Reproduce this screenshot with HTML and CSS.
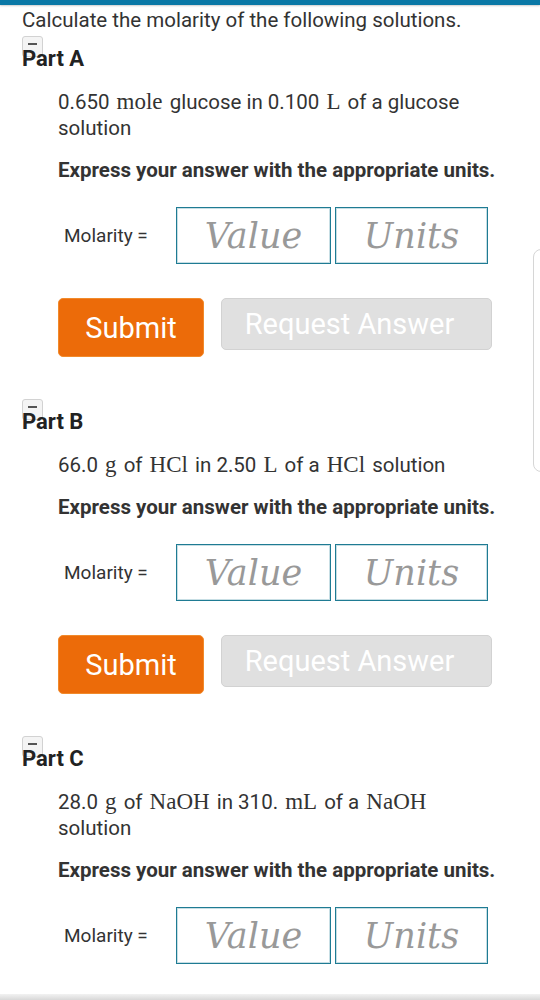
FILE: index.html
```html
<!DOCTYPE html>
<html lang="en">

<head>
  <meta charset="UTF-8">
  <meta name="viewport" content="width=device-width, initial-scale=1.0">
  <title>Molarity</title>
  <link rel="stylesheet" href="styles.css">
</head>

<body>

  <div class="top-bar"></div>

  <div class="page">

    <p class="intro">Calculate the molarity of the following solutions.</p>

    <!-- Part A -->
    <section class="part">
      <h2 class="part-title"><span class="collapse"></span>Part A</h2>
      <div class="part-body">
        <p class="problem">0.650 <span class="m">mole</span> glucose in 0.100 <span class="m">L</span> <span>of a glucose</span> solution</p>
        <p class="hint">Express your answer with the appropriate units.</p>
        <div class="answer-row">
          <span class="label">Molarity =</span>
          <div class="field">Value</div>
          <div class="field">Units</div>
        </div>
        <div class="buttons">
          <button class="submit">Submit</button>
          <button class="request">Request Answer</button>
        </div>
      </div>
    </section>

    <!-- Part B -->
    <section class="part">
      <h2 class="part-title"><span class="collapse"></span>Part B</h2>
      <div class="part-body">
        <p class="problem">66.0 <span class="m">g</span> of <span class="m">HCl</span> in 2.50 <span class="m">L</span> of a <span class="m">HCl</span> solution</p>
        <p class="hint">Express your answer with the appropriate units.</p>
        <div class="answer-row">
          <span class="label">Molarity =</span>
          <div class="field">Value</div>
          <div class="field">Units</div>
        </div>
        <div class="buttons">
          <button class="submit">Submit</button>
          <button class="request">Request Answer</button>
        </div>
      </div>
    </section>

    <!-- Part C -->
    <section class="part">
      <h2 class="part-title"><span class="collapse"></span>Part C</h2>
      <div class="part-body">
        <p class="problem">28.0 <span class="m">g</span> of <span class="m">NaOH</span> in 310. <span class="m">mL</span> of a <span class="m">NaOH</span> solution</p>
        <p class="hint">Express your answer with the appropriate units.</p>
        <div class="answer-row">
          <span class="label">Molarity =</span>
          <div class="field">Value</div>
          <div class="field">Units</div>
        </div>
      </div>
    </section>

  </div>

  <!-- side panel peeking in from the right edge -->
  <div class="side-panel"></div>

  <div class="bottom-bar"></div>

</body>

</html>
```

FILE: styles.css
```css
/* Basic page setup */
body {
  margin: 0;
  background: #fff;
  color: #333;
  font-family: Roboto, "Noto Sans", sans-serif;
  height: 1000px;
  overflow: hidden;
  position: relative;
}

.top-bar {
  height: 5px;
  background: #0a78a6;
  box-shadow: 0 1px 2px rgba(0, 0, 0, 0.2);
}

.page {
  padding: 0 0 0 22px;
}

.intro {
  margin: 2px 0 0;
  font-size: 20.5px;
  line-height: 26px;
  color: #333;
}

/* Parts */
.part-title {
  position: relative;
  margin: 52px 0 0;
  font-size: 22px;
  line-height: 26px;
  font-weight: bold;
  color: #222;
}
.intro + .part .part-title {
  margin-top: 13px;
}

/* the little collapse toggle tucked behind the heading */
.collapse {
  position: absolute;
  left: 0;
  top: -10px;
  width: 19px;
  height: 19px;
  border: 1px solid #d2d2d2;
  border-radius: 3px;
  background: #f4f4f4;
  z-index: -1;
}
.collapse::after {
  content: "";
  position: absolute;
  left: 5px;
  top: 6px;
  width: 9px;
  height: 2px;
  background: #555;
}

.part-body {
  padding-left: 36px;
}

.problem {
  margin: 17px 0 0;
  font-size: 20.5px;
  line-height: 26px;
  color: #333;
  padding-right: 40px;
}
.problem .m {
  font-family: "Liberation Serif", "DejaVu Serif", serif;
  font-size: 23px;
  line-height: 1;
  margin: 0 2px;
}

.hint {
  margin: 17px 0 0;
  font-size: 20.5px;
  line-height: 24px;
  font-weight: bold;
  color: #333;
}

/* Answer inputs */
.answer-row {
  display: flex;
  align-items: center;
  margin-top: 25px;
}
.label {
  font-size: 19px;
  color: #333;
  margin-left: 6px;
  width: 112px;
}
.field {
  box-sizing: border-box;
  width: 155px;
  height: 57px;
  border: 1px solid #1f7b93;
  box-shadow: inset 0 0 0 1px rgba(31, 123, 147, 0.25);
  margin-right: 4px;
  padding-top: 6px;
  font-family: "DejaVu Serif", serif;
  font-style: italic;
  font-size: 35px;
  color: #999;
  text-align: center;
  line-height: 44px;
}
.field + .field {
  width: 153px;
}

/* Buttons */
.buttons {
  display: flex;
  align-items: flex-start;
  gap: 17px;
  margin-top: 34px;
}
.submit, .request {
  font-family: Roboto, "Noto Sans", sans-serif;
  font-size: 29px;
  color: #fff;
  border-radius: 5px;
  cursor: pointer;
  padding: 0;
}
.submit {
  width: 146px;
  height: 59px;
  background: #ec6b09;
  border: 1px solid #f18a2b;
}
.request {
  width: 271px;
  height: 52px;
  padding-right: 14px;
  background: #e0e0e0;
  border: 1px solid #d2d2d2;
}

.side-panel {
  position: absolute;
  left: 533px;
  top: 249px;
  width: 30px;
  height: 221px;
  border: 1px solid #d6d6d6;
  border-radius: 8px;
  background: #fff;
}

.bottom-bar {
  position: absolute;
  left: 0;
  right: 0;
  bottom: 0;
  height: 6px;
  background: linear-gradient(#f2f2f2, #d8d8d8);
}
```
